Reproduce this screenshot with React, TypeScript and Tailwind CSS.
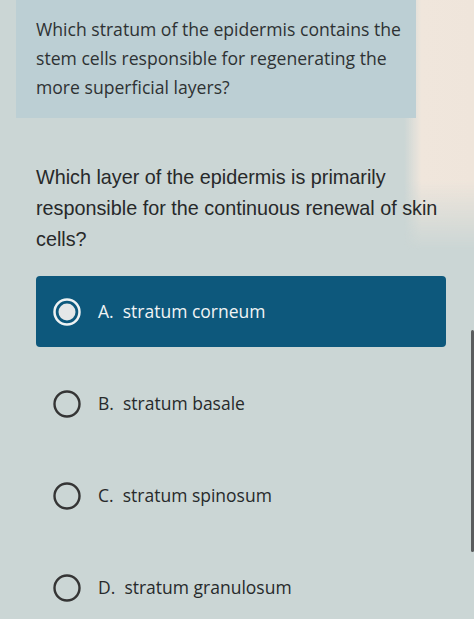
const options = [
  { letter: 'A.', text: 'stratum corneum', selected: true },
  { letter: 'B.', text: 'stratum basale', selected: false },
  { letter: 'C.', text: 'stratum spinosum', selected: false },
  { letter: 'D.', text: 'stratum granulosum', selected: false },
];

const Radio = ({ selected }: { selected: boolean }) =>
  selected ? (
    <svg width="28" height="28" viewBox="0 0 28 28" className="shrink-0">
      <circle cx="14" cy="14" r="12.5" fill="none" stroke="#eef2f3" strokeWidth="2.5" />
      <circle cx="14" cy="14" r="8.5" fill="#e4e7e8" />
    </svg>
  ) : (
    <svg width="28" height="28" viewBox="0 0 28 28" className="shrink-0">
      <circle cx="14" cy="14" r="12.5" fill="none" stroke="#353535" strokeWidth="2.4" />
    </svg>
  );

export default function App() {
  return (
    <div className="relative w-[474px] h-[619px] overflow-hidden bg-[#cbd6d5]">
      {/* light glare on the right edge of the photo, behind the content */}
      <div className="absolute top-0 right-0 w-[70px] h-[250px] bg-[linear-gradient(to_right,rgba(240,230,220,0)_0%,#f0e6dc_25%,#efe5db_100%)] [mask-image:linear-gradient(to_bottom,black_0%,black_72%,transparent_100%)]" />

      {/* first question, the one above */}
      <div className="relative ml-[16px] w-[400px] h-[118px] bg-[#bccfd4] pl-[20px] pt-[15px] pb-[15px] font-['Open_Sans',sans-serif] text-[17.6px] leading-[29px] text-[#2e3233]">
        Which stratum of the epidermis contains the
        <br />
        stem cells responsible for regenerating the
        <br />
        more superficial layers?
      </div>

      {/* current question */}
      <div className="relative pl-[36px] pr-[10px] pt-[44px] pb-[21px] font-['Liberation_Sans',Arial,sans-serif] text-[19.8px] leading-[31px] text-[#27292a]">
        Which layer of the epidermis is primarily
        <br />
        responsible for the continuous renewal of skin
        <br />
        cells?
      </div>

      <div className="relative flex flex-col gap-[21px] ml-[36px] w-[410px]">
        {options.map((o) => (
          <div
            key={o.letter}
            className={`flex items-center h-[71px] pl-[17px] rounded-[4px] gap-[17px] font-['Open_Sans',sans-serif] text-[17.5px] ${
              o.selected ? 'bg-[#0d587c] text-[#f1f4f5]' : 'text-[#272a2b]'
            }`}
          >
            <Radio selected={o.selected} />
            <span>
              {o.letter}&nbsp;&nbsp;{o.text}
            </span>
          </div>
        ))}
      </div>

      {/* scrollbar */}
      <div className="absolute right-0 top-[330px] w-[3px] h-[222px] rounded-full bg-[#5a5d5e]" />
    </div>
  );
}
